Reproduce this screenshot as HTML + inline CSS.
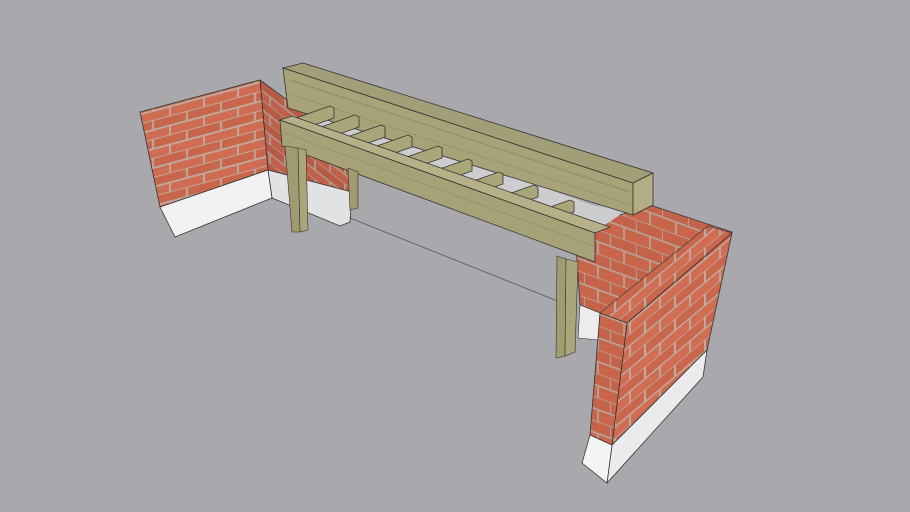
<!DOCTYPE html>
<html><head><style>html,body{margin:0;padding:0;background:#a9a9ad;}svg{display:block}</style></head>
<body>
<svg width="910" height="512" viewBox="0 0 910 512" xmlns="http://www.w3.org/2000/svg">
<defs>
<pattern id="bA" width="34" height="19" patternUnits="userSpaceOnUse" patternTransform="skewY(-15)">
<rect width="34" height="19" fill="#c0a89a"/>
<rect x="1" y="1" width="32" height="8" fill="#cf6c52"/><rect x="-16" y="10" width="32" height="8" fill="#c8664c"/><rect x="18" y="10" width="32" height="8" fill="#c8664c"/>
</pattern>
<pattern id="bB" width="30" height="19" patternUnits="userSpaceOnUse" patternTransform="skewY(38)">
<rect width="30" height="19" fill="#b0968a"/>
<rect x="1" y="1" width="28" height="8" fill="#c0604a"/><rect x="-14" y="10" width="28" height="8" fill="#b95b44"/><rect x="16" y="10" width="28" height="8" fill="#b95b44"/>
</pattern>
<pattern id="bC" width="30" height="23" patternUnits="userSpaceOnUse" patternTransform="skewY(-40)">
<rect width="30" height="23" fill="#c0a89a"/>
<rect x="1" y="1" width="28" height="10" fill="#d06d52"/><rect x="-14" y="12" width="28" height="10" fill="#c9664c"/><rect x="16" y="12" width="28" height="10" fill="#c9664c"/>
</pattern>
<pattern id="bD" width="26" height="24" patternUnits="userSpaceOnUse" patternTransform="skewY(20)">
<rect width="26" height="24" fill="#b89e90"/>
<rect x="1" y="1" width="24" height="11" fill="#c8654b"/><rect x="-12" y="13" width="24" height="10" fill="#c4624a"/><rect x="13" y="13" width="24" height="10" fill="#c4624a"/>
</pattern>
</defs>

<line x1="350" y1="218" x2="560" y2="302" stroke="#555" stroke-width="0.8"/>

<!-- left wall return face -->
<polygon points="260,80 352,148 352,192 268,170" fill="url(#bB)" stroke="#333" stroke-width="0.8"/>
<polygon points="268,170 352,192 350,222 340,226 272,198" fill="#e2e2e4" stroke="#333" stroke-width="0.8"/>
<!-- left wall front face -->
<polygon points="140,112 260,80 268,170 160,207" fill="url(#bA)" stroke="#333" stroke-width="0.8"/>
<polygon points="160,207 268,170 272,198 175,237" fill="#f2f2f2" stroke="#333" stroke-width="0.8"/>

<!-- gray block under beam -->
<polygon points="565,205 640,208 640,228 575,226" fill="#c9c9cb"/>

<!-- right wall back/inner -->
<polygon points="575,230 650,205 732,232 628,323 600,313 580,305" fill="url(#bD)" stroke="#333" stroke-width="0.8"/>
<polygon points="580,305 600,313 598,340 578,338" fill="#ececec" stroke="#333" stroke-width="0.6"/>
<polygon points="600,313 708,226 732,233 627,323" fill="url(#bC)" stroke="#333" stroke-width="0.6"/>
<!-- right wall side face -->
<polygon points="627,323 732,233 707,350 612,445" fill="url(#bC)" stroke="#333" stroke-width="0.8"/>
<polygon points="612,445 707,350 703,377 607,483" fill="#ebebed" stroke="#333" stroke-width="0.8"/>
<!-- right wall front face -->
<polygon points="600,313 627,323 612,445 590,435" fill="url(#bD)" stroke="#333" stroke-width="0.8"/>
<polygon points="590,435 612,445 607,483 582,463" fill="#f4f4f4" stroke="#333" stroke-width="0.8"/>

<!-- gaps between beams -->
<polygon points="300,118 330,110 620,215 600,228" fill="#cdcdd0"/>

<!-- top beam -->
<polygon points="283,68 303,63 653,173 633,183" fill="#a29e78" stroke="#333" stroke-width="0.8"/>
<polygon points="283,68 633,183 633,215 288,108" fill="#a7a277" stroke="#333" stroke-width="0.8"/>
<line x1="290" y1="80" x2="630" y2="192" stroke="#8f8a62" stroke-width="1"/>
<line x1="290" y1="94" x2="630" y2="205" stroke="#999468" stroke-width="1"/>
<polygon points="633,183 653,173 653,205 633,215" fill="#b2ad82" stroke="#333" stroke-width="0.8"/>

<!-- slats -->
<g fill="#aba67a" stroke="#333" stroke-width="0.8">
<polygon points="296,118 330,106 334,108 334,118 300,130 296,128"/>
<polygon points="321,127 355,115 359,117 359,127 325,139 321,137"/>
<polygon points="347,137 381,125 385,127 385,137 351,149 347,147"/>
<polygon points="374,147 408,135 412,137 412,147 378,159 374,157"/>
<polygon points="404,158 438,146 442,148 442,158 408,170 404,168"/>
<polygon points="434,171 468,159 472,161 472,171 438,183 434,181"/>
<polygon points="465,184 499,172 503,174 503,184 469,196 465,194"/>
<polygon points="500,197 534,185 538,187 538,197 504,209 500,207"/>
<polygon points="536,212 570,200 574,202 574,212 540,224 536,222"/>
</g>

<!-- front beam -->
<polygon points="280,120 292,116 610,227 595,233" fill="#b5b087" stroke="#333" stroke-width="0.8"/>
<polygon points="280,120 595,233 595,262 282,146" fill="#a6a176" stroke="#333" stroke-width="0.8"/>
<line x1="282" y1="132" x2="594" y2="246" stroke="#938e64" stroke-width="0.8"/>

<!-- posts -->
<polygon points="285,146 298,148 300,232 292,232" fill="#a09b70" stroke="#333" stroke-width="0.6"/>
<polygon points="298,148 306,150 308,230 300,232" fill="#aba67a" stroke="#333" stroke-width="0.6"/>
<polygon points="348,168 358,172 358,208 350,210" fill="#a09b70" stroke="#333" stroke-width="0.6"/>
<polygon points="557,256 566,259 565,356 556,358" fill="#a09b70" stroke="#333" stroke-width="0.6"/>
<polygon points="566,259 578,262 575,352 565,356" fill="#aba67a" stroke="#333" stroke-width="0.6"/>
</svg>
</body></html>
